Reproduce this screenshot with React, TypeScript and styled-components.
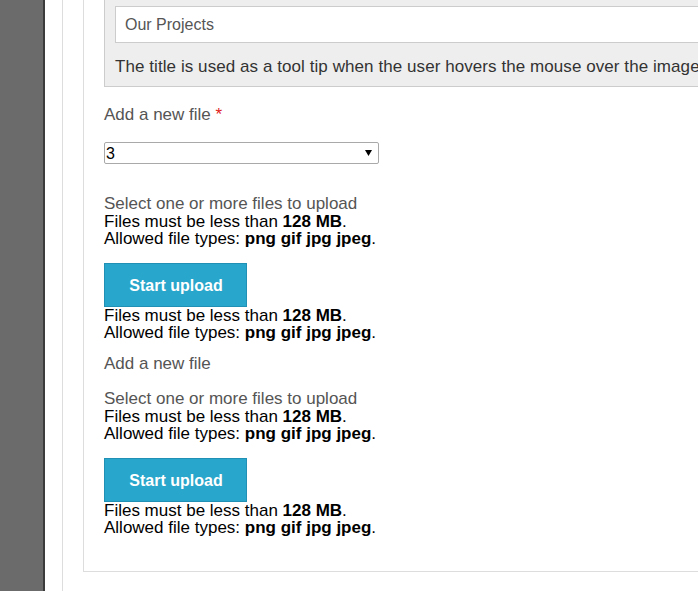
import React from 'react';
import styled, { createGlobalStyle } from 'styled-components';

const GlobalStyle = createGlobalStyle`
    html, body {
        margin: 0;
        padding: 0;
        background: #fff;
        font-family: 'Liberation Sans', Arial, sans-serif;
        overflow: hidden;
    }
`;

const Page = styled.div`
    display: flex;
    height: 100vh;
    overflow: hidden;
`;

const Sidebar = styled.aside`
    flex: 0 0 43px;
    background: #6b6b6b;
    border-right: 2px solid #3b3b3b;
`;

const Main = styled.main`
    flex: 1;
    min-width: 0;
    padding-left: 17px;
`;

const Column = styled.div`
    height: 100%;
    border-left: 1px solid #ddd;
    padding-left: 20px;
`;

const Card = styled.section`
    width: 700px;
    border-left: 1px solid #ddd;
    border-bottom: 1px solid #ddd;
    padding: 0 0 35px 20px;
`;

const TitleBox = styled.div`
    width: 640px;
    background: #eee;
    border: 1px solid #ccc;
    border-top: none;
    padding: 6px 10px 10px;
`;

const TextInput = styled.input`
    display: block;
    box-sizing: border-box;
    width: 100%;
    height: 37px;
    margin: 0;
    padding: 0 9px;
    border: 1px solid #ccc;
    background: #fff;
    font: 16px 'Liberation Sans', Arial, sans-serif;
    color: #555;
    outline: none;
`;

const Description = styled.div`
    margin-top: 14px;
    font-size: 17px;
    line-height: 19px;
    letter-spacing: 0.07px;
    color: #333;
    white-space: nowrap;
`;

const FieldLabel = styled.div<{ $top: number }>`
    margin-top: ${p => p.$top}px;
    font-size: 17px;
    line-height: 19px;
    color: #555;
`;

const Required = styled.span`
    color: #e02020;
`;

const SelectWrap = styled.div`
    position: relative;
    width: 275px;
    height: 22px;
    margin-top: 18px;
`;

const Select = styled.select`
    box-sizing: border-box;
    width: 100%;
    height: 100%;
    margin: 0;
    padding: 0 0 0 1px;
    border: 1px solid #a9a9a9;
    border-radius: 2px;
    background: #fff;
    appearance: none;
    font: 16px 'Liberation Sans', Arial, sans-serif;
    color: #000;
    outline: none;
`;

const Arrow = styled.svg`
    position: absolute;
    right: 7px;
    top: 8px;
    pointer-events: none;
`;

const Help = styled.div`
    font-size: 17px;
    line-height: 17px;
    color: #000;

    b {
        font-weight: bold;
    }
`;

const UploadButton = styled.button`
    display: block;
    box-sizing: border-box;
    width: 143px;
    height: 44px;
    margin: 16px 0 0;
    padding: 0 0 0 1px;
    border: 1px solid #2091b5;
    background: #29a6cb;
    color: #fff;
    font: bold 16px 'Liberation Sans', Arial, sans-serif;
    line-height: 44px;
    cursor: pointer;
`;

function FileHelp() {
    return (
        <Help>
            <div>
                Files must be less than <b>128 MB</b>.
            </div>
            <div>
                Allowed file types: <b>png gif jpg jpeg</b>.
            </div>
        </Help>
    );
}

type UploadProps = {
    // gap above the "Select one or more files" label
    top: number;
};

function UploadBlock({ top }: UploadProps) {
    return (
        <>
            <FieldLabel $top={top}>Select one or more files to upload</FieldLabel>
            <FileHelp />
            <UploadButton>Start upload</UploadButton>
            <FileHelp />
        </>
    );
}

export default function App() {
    return (
        <>
            <GlobalStyle />
            <Page>
                <Sidebar />
                <Main>
                    <Column>
                        <Card>
                            <TitleBox>
                                <TextInput readOnly value="Our Projects" />
                                <Description>
                                    The title is used as a tool tip when the user hovers the mouse over the image.
                                </Description>
                            </TitleBox>

                            <FieldLabel $top={18}>
                                Add a new file <Required>*</Required>
                            </FieldLabel>
                            <SelectWrap>
                                <Select defaultValue="3">
                                    <option value="1">1</option>
                                    <option value="2">2</option>
                                    <option value="3">3</option>
                                </Select>
                                <Arrow width="7" height="6" viewBox="0 0 7 6">
                                    <path d="M0 0 L7 0 L3.5 6 Z" fill="#000" />
                                </Arrow>
                            </SelectWrap>
                            <UploadBlock top={30} />

                            <FieldLabel $top={13}>Add a new file</FieldLabel>
                            <UploadBlock top={16} />
                        </Card>
                    </Column>
                </Main>
            </Page>
        </>
    );
}
